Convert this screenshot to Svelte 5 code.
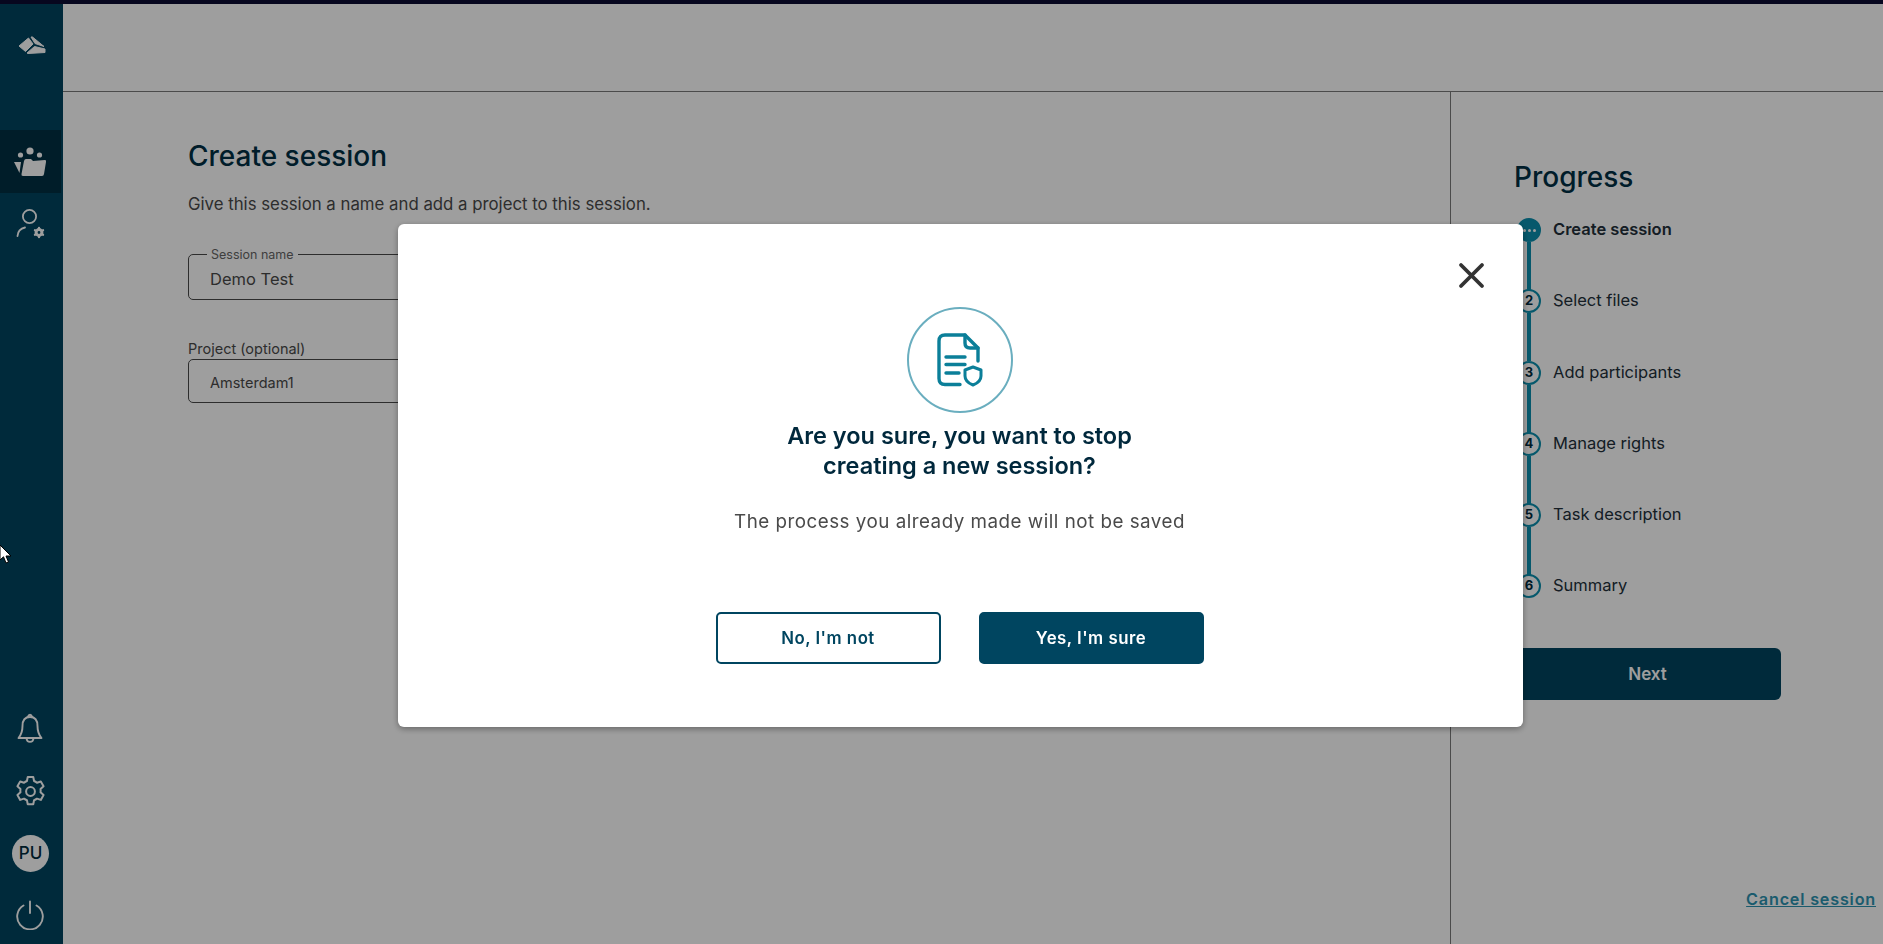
<script>
  const steps = [
    { n: '2', label: 'Select files' },
    { n: '3', label: 'Add participants' },
    { n: '4', label: 'Manage rights' },
    { n: '5', label: 'Task description' },
    { n: '6', label: 'Summary' }
  ];
</script>

<div class="page">
  <div class="topline"></div>
  <div class="shell">
    <aside class="sidebar">
      <div class="logo">
        <svg width="30" height="20" viewBox="0 0 30 20" fill="#fff" stroke="#fff" stroke-width="1" stroke-linejoin="round"><path d="M2 11 L11.500 3 L16 9 L8.500 16.500 Z M14 2 L15.500 2 L27 11.500 L18 8.500 Z M10 18 L17.500 11.500 L28 14 L28 17.500 L11 18.500 Z"/></svg>
      </div>
      <div class="navitem active">
        <svg width="34" height="30" viewBox="0 0 34 30" fill="#fff">
          <circle cx="17" cy="4" r="3.600"/><circle cx="7.500" cy="8" r="2.600"/><circle cx="26.500" cy="8" r="2.600"/>
          <path d="M1 15 L8 15 L6.500 26 Z"/>
          <path d="M13 12 L18 12 L20 14 L32 13 Q33.500 13 33 15 L31 27 Q30.800 29 29 29 L10 29 Q8 29 8.500 27 L11 14 Q11.500 12 13 12 Z"/>
        </svg>
      </div>
      <div class="navitem user">
        <svg width="30" height="30" viewBox="0 0 30 30" fill="none" stroke="#fff" stroke-width="1.800" stroke-linecap="round">
          <circle cx="13.500" cy="7.500" r="6.600"/>
          <path d="M1.500 27 Q2 20 9 18.500"/>
          <circle cx="23" cy="23.500" r="2.900" stroke-width="3"/>
          <path d="M23 18.800 V20 M23 27 V28.200 M18.900 21.200 L20 21.800 M26 25.200 L27.100 25.800 M18.900 25.800 L20 25.200 M26 21.800 L27.100 21.200" stroke-width="2.200"/>
        </svg>
      </div>
      <div class="spacer"></div>
      <div class="bottomicons">
        <svg width="26" height="32" viewBox="0 0 26 32" fill="none" stroke="#fff" stroke-width="1.900" stroke-linejoin="round">
          <path d="M13 4 C7.500 4 5.500 8 5.500 13 C5.500 19 4 22 1.500 25 H24.500 C22 22 20.500 19 20.500 13 C20.500 8 18.500 4 13 4 Z"/>
          <path d="M10.500 4.500 Q13 -1 15.500 4.500"/>
          <path d="M9.500 25.500 C10 30 16 30 16.500 25.500"/>
        </svg>
        <svg class="gear" width="33" height="33" viewBox="0 0 24 24" fill="none" stroke="#fff" stroke-width="1.450" stroke-linejoin="round">
          <circle cx="12" cy="12" r="3.200"/>
          <path d="M10 1.500 h4 l.6 2.900 a8 8 0 0 1 2.100 1.200 l2.800-.9 2 3.500-2.200 2 a8 8 0 0 1 0 2.400 l2.200 2-2 3.500-2.800-.9 a8 8 0 0 1-2.100 1.200 l-.6 2.900 h-4 l-.6-2.900 a8 8 0 0 1-2.100-1.200 l-2.800.9-2-3.500 2.200-2 a8 8 0 0 1 0-2.400 l-2.200-2 2-3.500 2.800.9 a8 8 0 0 1 2.100-1.200 Z"/>
        </svg>
        <div class="avatar">PU</div>
        <svg width="28" height="30" viewBox="0 0 28 30" fill="none" stroke="#fff" stroke-width="1.900" stroke-linecap="round">
          <path d="M14 1.500 V13"/>
          <path d="M7.500 5.500 A12.800 12.800 0 1 0 20.500 5.500"/>
        </svg>
      </div>
    </aside>

    <div class="main">
      <header class="header"></header>
      <div class="body">
        <section class="content">
          <h1>Create session</h1>
          <p class="intro">Give this session a name and add a project to this session.</p>
          <fieldset class="field">
            <legend>Session name</legend>
            <span class="value">Demo Test</span>
          </fieldset>
          <div class="plainlabel">Project (optional)</div>
          <div class="field select"><span class="value small">Amsterdam1</span></div>
        </section>
        <section class="progress">
          <h2>Progress</h2>
          <ol class="steps">
            <li class="step">
              <span class="dot current"><i></i><i></i><i></i></span>
              <span class="steplabel strong">Create session</span>
            </li>
            {#each steps as s}
              <li class="step">
                <span class="dot">{s.n}</span>
                <span class="steplabel">{s.label}</span>
              </li>
            {/each}
          </ol>
          <button class="next">Next</button>
          <div class="cancelrow"><a class="cancel" href="#cancel">Cancel session</a></div>
        </section>
      </div>
    </div>
  </div>
</div>

<div class="backdrop">
  <div class="modal" role="dialog">
    <button class="close" aria-label="Close">
      <svg width="27" height="27" viewBox="0 0 27 27" fill="none" stroke="#333" stroke-width="3.800" stroke-linecap="round"><path d="M3 3 L24 24 M24 3 L3 24"/></svg>
    </button>
    <div class="iconring">
      <svg width="46" height="54" viewBox="0 0 46 54" fill="none" stroke="#0b7f99" stroke-width="3.400" stroke-linecap="round" stroke-linejoin="round">
        <path d="M23 51.500 H8 Q2 51.500 2 45.500 V8 Q2 2 8 2 H28 L41 15 V28"/>
        <path d="M28 2 V10 Q28 15 33 15 H41"/>
        <path d="M9 24 H28 M9 31.500 H28 M9 40 H22"/>
        <path d="M36 34 L44 37 V43 Q44 49 36 52 Q28 49 28 43 V37 Z" stroke-width="3"/>
      </svg>
    </div>
    <h3>Are you sure, you want to stop<br />creating a new session?</h3>
    <p class="msg">The process you already made will not be saved</p>
    <div class="actions">
      <button class="btn ghost">No, I'm not</button>
      <button class="btn solid">Yes, I'm sure</button>
    </div>
  </div>
</div>

<svg class="cursor" width="12" height="20" viewBox="0 0 12 20"><path d="M0 0 V15 L3.500 11.800 L6 18 L8.500 17 L6 11 H11 Z" fill="#fff" stroke="#000" stroke-width="1"/></svg>

<style>
  :global(body) { margin: 0; background: #fff; overflow: hidden; }
  :global(*) { box-sizing: border-box; }

  .page { width: 1883px; height: 944px; display: flex; flex-direction: column; font-family: Inter, "Open Sans", sans-serif; color: #2f2f2f; background: #fff; }
  .topline { height: 4px; margin-bottom: -1px; background: #0c0c33; flex: none; position: relative; }
  .shell { flex: 1; display: flex; min-height: 0; }

  .sidebar { width: 63px; flex: none; background: #004560; display: flex; flex-direction: column; align-items: stretch; }
  .logo { height: 72px; padding-top: 32px; display: flex; justify-content: center; align-items: flex-start; }
  .navitem { display: flex; align-items: center; justify-content: center; }
  .active { margin-top: 55px; height: 63px; width: 61px; background: #002f43; padding-right: 1px; }
  .user { margin-top: 13px; height: 36px; padding-right: 2px; }
  .spacer { flex: 1; }
  .bottomicons { display: flex; flex-direction: column; align-items: center; padding: 0 3px 14px 0; gap: 31px; }
  .gear { margin: -1px 0; }
  .avatar { width: 37px; height: 37px; border-radius: 50%; background: #fff; color: #002a3d; font: 500 17px/37px Inter, sans-serif; text-align: center; margin: -2.500px 0 -3px 1px; }

  .main { flex: 1; display: flex; flex-direction: column; min-width: 0; }
  .header { height: 89px; border-bottom: 1px solid #7a7a7a; flex: none; }
  .body { flex: 1; display: flex; min-height: 0; }

  .content { width: 1387px; padding: 47px 0 0 125px; flex: none; }
  h1 { margin: 0; font-size: 28px; line-height: 34px; font-weight: 500; color: #002f45; }
  .intro { margin: 19px 0 0; font-size: 16.800px; line-height: 24px; color: #4a4a4a; }
  .field { display: block; margin: 0; width: 640px; height: 44px; border: 1.500px solid #4a4a4a; border-radius: 5px; padding: 0 0 0 21px; }
  fieldset.field { margin-top: 32px; padding-left: 18px; min-inline-size: auto; height: 52px; }
  legend { font-size: 12.500px; line-height: 13px; padding: 0 4px; color: #666; margin-left: 0; }
  .value { font-size: 16.500px; line-height: 24px; color: #4a4a4a; display: block; padding: 6px 0 0 3px; }
  .value.small { font-size: 14.500px; padding: 11px 0 0; }
  .plainlabel { margin-top: 39px; font-size: 14.500px; line-height: 20px; color: #4a4a4a; }
  .select { margin-top: 0; }

  .progress { flex: 1; border-left: 1px solid #7a7a7a; padding: 67px 0 0 63px; position: relative; min-width: 0; }
  h2 { margin: 0; font-size: 28px; line-height: 36px; font-weight: 500; color: #002f45; }
  .steps { list-style: none; margin: 23px 0 0; padding: 0; }
  .step { height: 71.300px; display: flex; align-items: flex-start; gap: 12px; position: relative; }
  .step:not(:last-child)::after { content: ""; position: absolute; left: 13px; top: 24px; width: 4px; height: 48px; background: #0a8fae; }
  .dot { width: 24px; height: 24px; border: 2px solid #0a8fae; border-radius: 50%; font: 700 13px/19px Inter, sans-serif; color: #002a3d; text-align: center; margin-left: 3px; flex: none; }
  .dot.current { background: #0a8fae; display: flex; align-items: center; justify-content: center; gap: 2px; }
  .dot.current i { width: 3px; height: 3px; background: #fff; border-radius: 50%; }
  .steplabel { font-size: 16.500px; line-height: 22px; color: #22303a; }
  .steplabel.strong { font-weight: 600; }

  .next { display: block; width: 267px; height: 52px; margin-top: 2px; background: #004560; color: #fff; border: 0; border-radius: 6px; font: 600 17px Inter, sans-serif; }
  .cancelrow { position: absolute; right: 7px; bottom: 35px; }
  .cancel { font-size: 16.200px; font-weight: 600; letter-spacing: .8px; color: #2d93b1; text-decoration: underline; }

  .backdrop { position: fixed; inset: 0; background: rgba(0, 0, 0, .38); z-index: 10; }
  .modal { position: absolute; left: 398px; top: 224px; width: 1125px; height: 503px; background: #fff; border-radius: 6px; box-shadow: 0 2px 6px rgba(0, 0, 0, .35); display: flex; flex-direction: column; align-items: center; padding: 83px 2px 0 0; font-family: Inter, sans-serif; }
  .close { position: absolute; left: 1060px; top: 38px; width: 27px; height: 27px; background: none; border: 0; padding: 0; display: flex; }
  .iconring { width: 106px; height: 106px; border-radius: 50%; border: 2px solid #6aaebf; display: flex; align-items: center; justify-content: center; }
  h3 { margin: 8px 0 0; font-size: 23.500px; line-height: 30px; font-weight: 600; color: #00283c; text-align: center; }
  .msg { margin: 28px 0 0; font-size: 18.800px; line-height: 26px; letter-spacing: .5px; color: #4a4a4a; }
  .actions { display: flex; gap: 38px; margin-top: 77px; }
  .btn { width: 225px; height: 52px; border-radius: 5px; font: 600 16.800px Inter, sans-serif; letter-spacing: .5px; border: 2.500px solid #004560; }
  .ghost { background: #fff; color: #004560; }
  .solid { background: #004560; color: #fff; }

  .cursor { position: fixed; left: 0; top: 545px; z-index: 20; }
</style>
